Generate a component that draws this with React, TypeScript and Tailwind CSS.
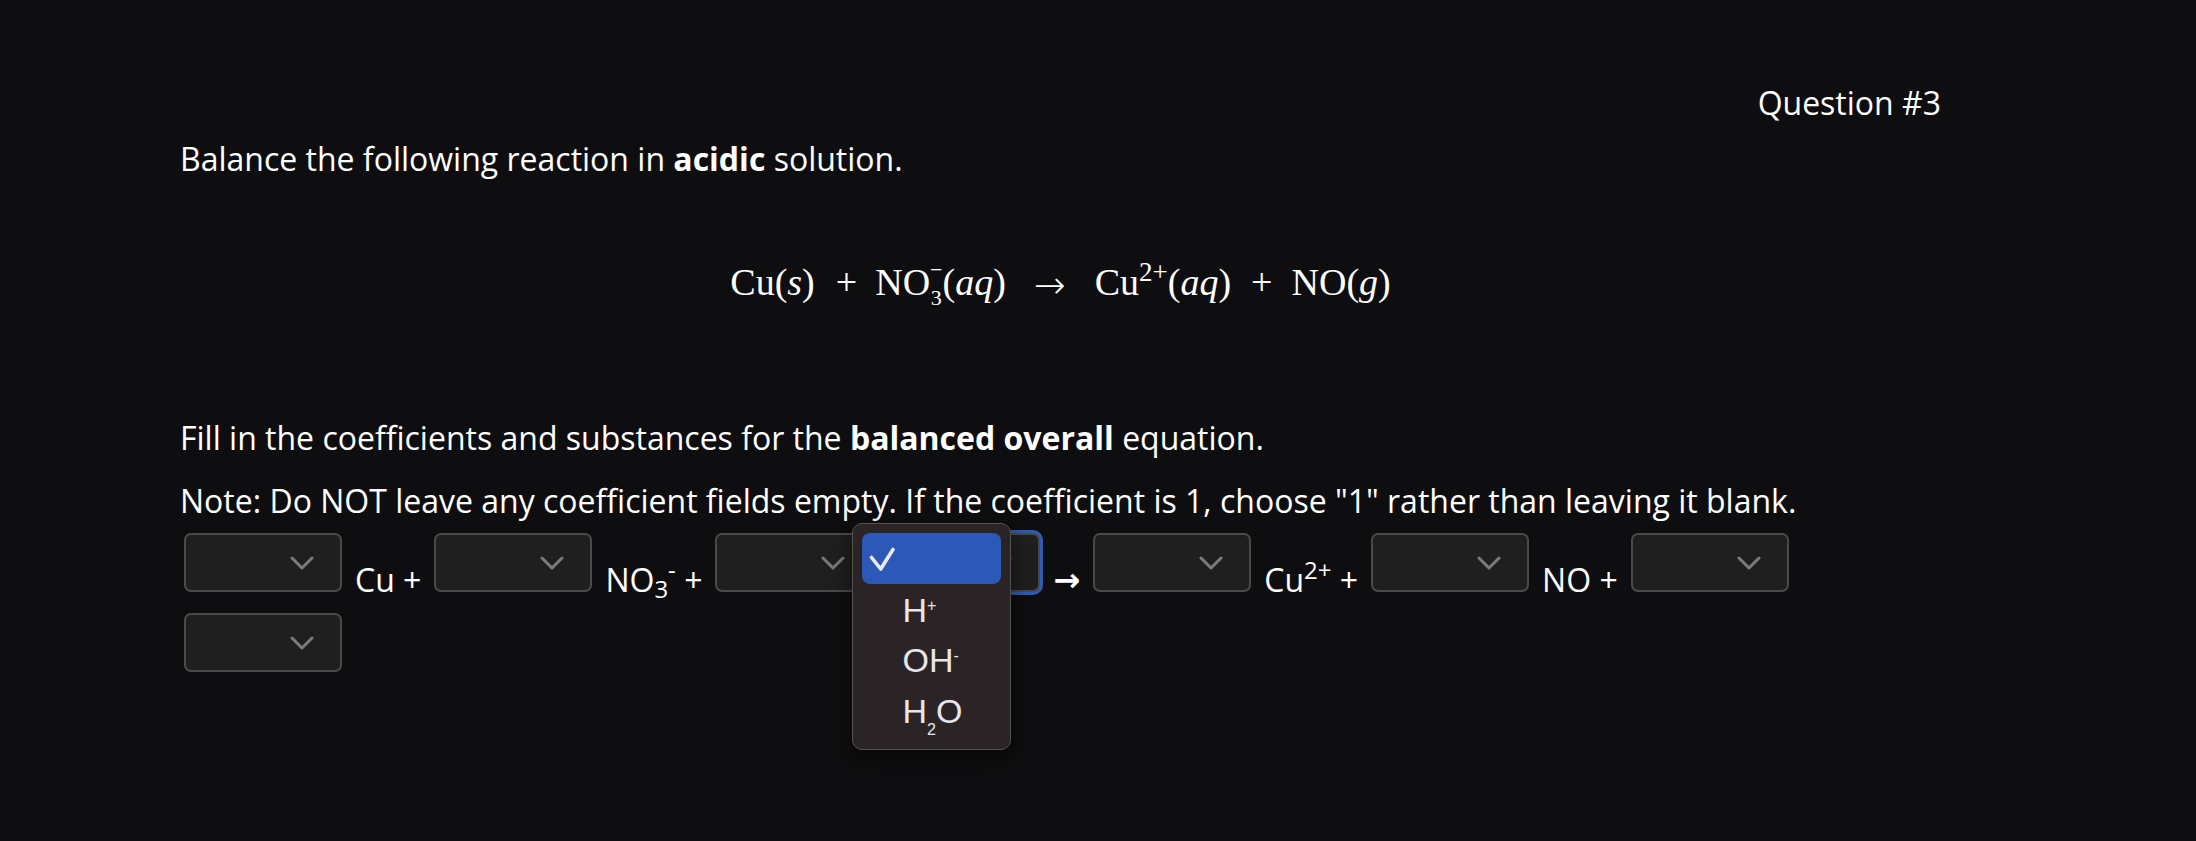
import React from 'react'

function Chevron() {
  return (
    <svg width="24" height="14" viewBox="0 0 24 14" fill="none">
      <path d="M2 2l10 10L22 2" stroke="#7b7b7b" strokeWidth="3" strokeLinecap="round" strokeLinejoin="round" />
    </svg>
  )
}

function Select({ focused, children }: { focused?: boolean; children?: React.ReactNode }) {
  return (
    <div
      className={`relative flex h-[59px] w-[158px] shrink-0 items-center justify-end rounded-[7px] border-2 border-[#4a4a4a] bg-[#1f1f1f] pr-[26px] ${
        focused ? '-ml-1 ring-[3px] ring-[#2f5bb5]' : ''
      }`}
    >
      <Chevron />
      {children}
    </div>
  )
}

function Label({ children }: { children: React.ReactNode }) {
  return <span className="-mb-1 whitespace-nowrap leading-none">{children}</span>
}

// the open native option list of the focused substance select
function OptionList() {
  return (
    <div className="absolute left-[-32px] top-[-12px] z-10 h-[227px] w-[159px] rounded-[10px] border border-[#57514f] bg-[#2b2427] p-[9px] font-['Liberation_Sans',Arial,sans-serif] text-[34px] leading-[52px] text-[#e8e6e8] shadow-[0_8px_24px_rgba(0,0,0,0.5)]">
      <div className="relative h-[51px] rounded-[8px] bg-[#2c58b8]">
        <svg className="absolute left-[7px] top-[13px]" width="26" height="26" viewBox="0 0 26 26" fill="none">
          <path d="M2.5 11.5l9.2 11.5L24 3.5" stroke="#eceaf0" strokeWidth="3.6" strokeLinecap="round" strokeLinejoin="round" />
        </svg>
      </div>
      <div className="h-[50px] whitespace-nowrap pl-[40px]">
        H<span className="align-[11px] text-[16px] leading-[0]">+</span>
      </div>
      <div className="h-[51px] whitespace-nowrap pl-[40px]">
        OH<span className="align-[11px] text-[16px] leading-[0]">-</span>
      </div>
      <div className="h-[52px] whitespace-nowrap pl-[40px]">
        H<span className="align-[-12px] text-[16px] leading-[0]">2</span>O
      </div>
    </div>
  )
}

export default function App() {
  return (
    <div className="min-h-screen w-full bg-[#0e0e10] text-white">
      <div className="ml-[180px] w-[1761px] pt-[81px] font-['Open_Sans','Noto_Sans',sans-serif] text-[32px] leading-[44px]">
        <div className="text-right">Question #3</div>
        <p className="mt-[12px]">
          Balance the following reaction in <b className="font-bold">acidic</b> solution.
        </p>

        <div className="mt-[61px] whitespace-nowrap text-center font-['Liberation_Serif','DejaVu_Serif',serif] text-[38px] leading-[80px]">
          <span>
            Cu(<i>s</i>)
          </span>
          <span className="ml-[21px]">+</span>
          <span className="ml-[18px]">NO</span>
          <span className="inline-block align-[-10px] text-[22px] leading-[22px]">
            <span className="mb-[6px] block">−</span>
            <span className="block">3</span>
          </span>
          <span>
            (<i>aq</i>)
          </span>
          <span className="ml-[28px] align-[-3px] font-['DejaVu_Sans',sans-serif] text-[38px] font-extralight leading-[0]">→</span>
          <span className="ml-[29px]">Cu</span>
          <span className="align-[14px] text-[27px] leading-[0]">2+</span>
          <span>
            (<i>aq</i>)
          </span>
          <span className="ml-[20px]">+</span>
          <span className="ml-[19px]">
            NO(<i>g</i>)
          </span>
        </div>

        <p className="mt-[94px]">
          Fill in the coefficients and substances for the <b className="font-bold">balanced overall</b> equation.
        </p>
        <p className="mt-[19px]">
          Note: Do NOT leave any coefficient fields empty. If the coefficient is 1, choose "1" rather than leaving it
          blank.
        </p>

        <div className="mt-[10px] flex flex-wrap items-end gap-x-[13px] gap-y-[21px] pl-[4px]">
          <Select />
          <Label>Cu +</Label>
          <Select />
          <Label>
            NO<span className="align-[-6px] text-[24px] leading-[0]">3</span>
            <span className="align-[13px] text-[24px] leading-[0]">-</span> +
          </Label>
          <Select />
          <Select focused>
            <OptionList />
          </Select>
          <span className="-mb-1 font-['DejaVu_Sans',sans-serif] font-bold leading-none">→</span>
          <Select />
          <Label>
            Cu<span className="align-[13px] text-[24px] leading-[0]">2+</span> +
          </Label>
          <Select />
          <Label>NO +</Label>
          <Select />
          <Select />
        </div>
      </div>
    </div>
  )
}
